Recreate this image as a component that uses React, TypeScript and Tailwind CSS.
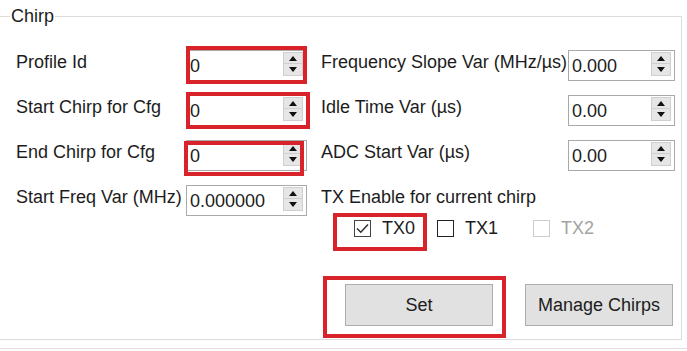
import React from 'react';

const RED = 'border-[#d8232b]';

const Arrow = ({ up }: { up?: boolean }) => (
  <svg width="8" height="5" viewBox="0 0 8 5">
    {up ? <path d="M0 5 L4 0 L8 5 Z" fill="#111" /> : <path d="M0 0 L8 0 L4 5 Z" fill="#111" />}
  </svg>
);

const Spin = ({ value, w }: { value: string; w: string }) => (
  <div className={`flex h-[31px] ${w} items-stretch border border-[#a9a9a9] bg-white`}>
    <div className="flex flex-1 items-center pl-[3px] leading-none">{value}</div>
    <div className="my-[1px] mr-[3px] flex w-[20px] flex-col">
      <div className="flex h-[12px] items-center justify-center border border-[#cfcfcf] bg-[#e6e6e6]">
        <Arrow up />
      </div>
      <div className="flex h-[12px] items-center justify-center border border-t-0 border-[#cfcfcf] bg-[#e6e6e6]">
        <Arrow />
      </div>
    </div>
  </div>
);

const Row = ({ label, children }: { label: string; children?: React.ReactNode }) => (
  <div className="flex h-[31px] items-center justify-between">
    <span className="pb-[7px] leading-[22px] whitespace-nowrap">{label}</span>
    {children}
  </div>
);

const Check = ({ label, checked, disabled, w }: { label: string; checked?: boolean; disabled?: boolean; w: string }) => (
  <div className={`flex ${w} items-center gap-[11px]`}>
    <div
      className={`flex h-[17px] w-[17px] items-center justify-center border bg-white ${
        disabled ? 'border-[#cccccc]' : checked ? 'border-[#444]' : 'border-[#222]'
      }`}
    >
      {checked && (
        <svg width="13" height="11" viewBox="0 0 13 11">
          <path d="M1 5.5 L4.8 9.2 L12 1.5" fill="none" stroke="#333" strokeWidth="1.6" />
        </svg>
      )}
    </div>
    <span className={`leading-[22px] ${disabled ? 'text-[#a3a3a3]' : ''}`}>{label}</span>
  </div>
);

export default function App() {
  return (
    <div className="relative h-[351px] w-[687px] overflow-hidden bg-white font-['Liberation_Sans',Arial,sans-serif] text-[18px] text-[#1c1c1c]">
      {/* group box */}
      <div className="relative -ml-px mt-[16px] h-[324px] w-[683px] border border-[#dcdcdc]">
        <span className="absolute -top-[12px] left-[10px] bg-white px-[1px] leading-[22px]">Chirp</span>

        <div className="flex pt-[33px]">
          {/* left column */}
          <div className="ml-[16px] flex w-[291px] flex-col gap-[14px]">
            <Row label="Profile Id"><Spin value="0" w="w-[121px]" /></Row>
            <Row label="Start Chirp for Cfg"><Spin value="0" w="w-[121px]" /></Row>
            <Row label="End Chirp for Cfg"><Spin value="0" w="w-[121px]" /></Row>
            <Row label="Start Freq Var (MHz)"><Spin value="0.000000" w="w-[121px]" /></Row>
          </div>

          {/* right column */}
          <div className="ml-[14px] flex w-[354px] flex-col">
            <div className="flex flex-col gap-[14px]">
              <Row label="Frequency Slope Var (MHz/µs)"><Spin value="0.000" w="w-[107px]" /></Row>
              <Row label="Idle Time Var (µs)"><Spin value="0.00" w="w-[107px]" /></Row>
              <Row label="ADC Start Var (µs)"><Spin value="0.00" w="w-[107px]" /></Row>
              <Row label="TX Enable for current chirp" />
            </div>
            <div className="flex h-[24px] items-center pl-[33px]">
              <Check label="TX0" checked w="w-[83px]" />
              <Check label="TX1" w="w-[96px]" />
              <Check label="TX2" disabled w="w-[80px]" />
            </div>
            <div className="mt-[44px] flex gap-[32px] pl-[24px]">
              <button className="h-[42px] w-[148px] border border-[#adadad] bg-[#e1e1e1] leading-none">Set</button>
              <button className="h-[42px] w-[148px] border border-[#adadad] bg-[#e1e1e1] leading-none">Manage Chirps</button>
            </div>
          </div>
        </div>
      </div>
      <div className="mt-[8px] h-px bg-[#e2e2e2]" />

      {/* red annotation boxes */}
      <div className={`absolute left-[186px] top-[46px] h-[38px] w-[121px] border-[4px] ${RED}`} />
      <div className={`absolute left-[186px] top-[92px] h-[37px] w-[124px] border-[4px] ${RED}`} />
      <div className={`absolute left-[184px] top-[141px] h-[35px] w-[120px] border-[4px] ${RED}`} />
      <div className={`absolute left-[333px] top-[213px] h-[38px] w-[94px] border-[4px] ${RED}`} />
      <div className={`absolute left-[323px] top-[276px] h-[62px] w-[183px] border-[4px] ${RED}`} />
    </div>
  );
}
